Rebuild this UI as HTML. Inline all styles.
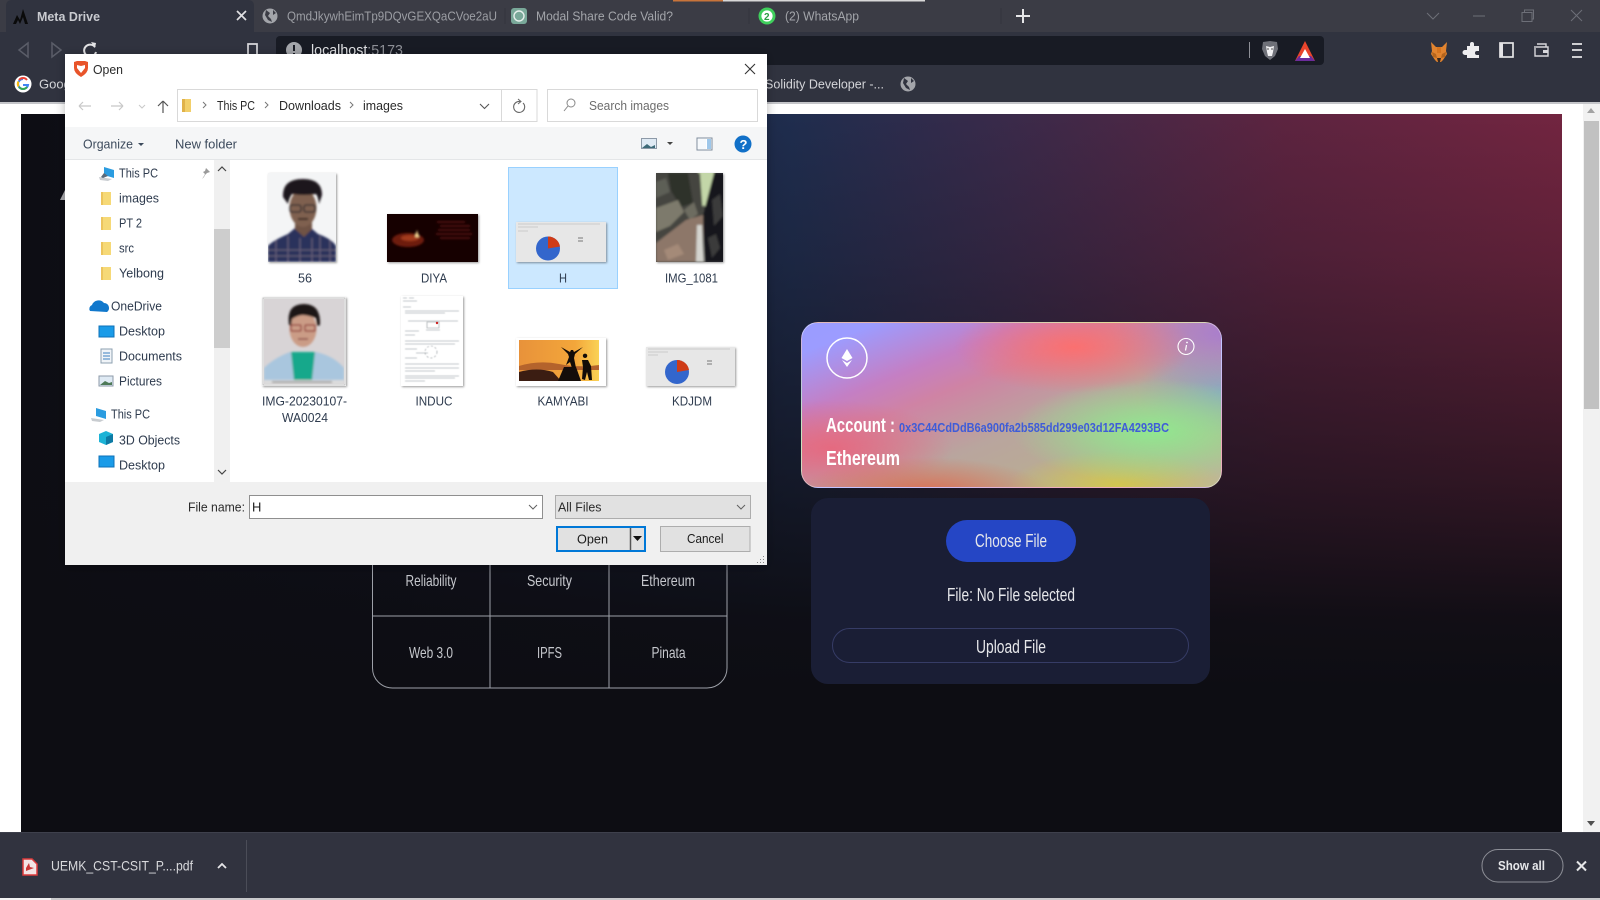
<!DOCTYPE html>
<html lang="en"><head><meta charset="utf-8"><title>Meta Drive</title>
<style>
html,body{margin:0;padding:0;width:1600px;height:900px;overflow:hidden;background:#fff}
#hero{position:absolute;left:21px;top:114px;width:1541px;height:718px;background:linear-gradient(to bottom,rgba(13,13,19,0) 0,rgba(13,13,19,.2) 20%,rgba(13,13,19,.62) 50%,rgba(13,13,19,.95) 70%,#0d0d13 80%),linear-gradient(90deg,#0d0d13 0,#101226 25%,#1f2d4e 50%,#3a2a4a 64%,#5d2440 82%,#722540 100%)}
#card{position:absolute;left:801px;top:322px;width:419px;height:164px;border:1px solid rgba(255,255,255,.4);border-radius:17px;background:
radial-gradient(ellipse 120px 46px at 272px 24px,#fb7070 0,rgba(250,112,112,.55) 45%,rgba(248,112,112,0) 100%),
radial-gradient(ellipse 140px 52px at 350px 108px,#90e890 0,rgba(144,232,144,.6) 45%,rgba(147,229,149,0) 100%),
radial-gradient(ellipse 110px 34px at 316px 162px,#d2c650 0,rgba(207,196,95,0) 100%),
radial-gradient(ellipse 130px 38px at 122px 172px,#dc6c50 0,rgba(219,111,88,0) 100%),
radial-gradient(ellipse 120px 48px at 30px 125px,#e56a80 0,rgba(226,108,130,0) 100%),
radial-gradient(ellipse 110px 60px at 419px 10px,#aa7ecc 0,rgba(173,128,198,0) 100%),
radial-gradient(ellipse 90px 45px at 425px 68px,#88abc0 0,rgba(143,169,184,0) 100%),
linear-gradient(158deg,#9a9cff 0,#9c9cff 9%,#c47fc4 27%,#cf83a4 38%,#b9a59e 58%,#b9ad92 78%,#bdb89a 100%)}
#panel{position:absolute;left:811px;top:498px;width:399px;height:186px;border-radius:17px;background:#1a1e35}
#btn{position:absolute;left:946px;top:520px;width:130px;height:42px;border-radius:21px;background:#2546c5}
#up{position:absolute;left:832px;top:628px;width:355px;height:33px;border:1px solid #363c66;border-radius:18px}
svg{position:absolute;left:0;top:0}
text{font-family:"Liberation Sans",sans-serif}
</style></head><body>
<div id="hero"></div><div id="card"></div><div id="panel"></div><div id="btn"></div><div id="up"></div>
<svg width="1600" height="900" viewBox="0 0 1600 900" xmlns="http://www.w3.org/2000/svg">
<defs>
<filter id="b1" x="-10%" y="-10%" width="120%" height="120%"><feGaussianBlur stdDeviation="1"/></filter>
<filter id="b2" x="-10%" y="-10%" width="120%" height="120%"><feGaussianBlur stdDeviation=".4"/></filter>
<filter id="sh" x="-5%" y="-5%" width="110%" height="110%"><feDropShadow dx="0" dy="1" stdDeviation="5" flood-color="#000" flood-opacity=".28"/></filter>
<filter id="ts" x="-10%" y="-10%" width="125%" height="125%"><feDropShadow dx="1" dy="1" stdDeviation="1" flood-color="#000" flood-opacity=".4"/></filter>
<linearGradient id="sun" x1="0" y1="0" x2="1" y2="0"><stop offset="0" stop-color="#e8923a"/><stop offset=".7" stop-color="#f3a63a"/><stop offset="1" stop-color="#fad255"/></linearGradient>
<clipPath id="c56"><rect x="268" y="173" width="68" height="89"/></clipPath>
<clipPath id="cg"><rect x="264" y="299" width="80" height="85"/></clipPath>
<clipPath id="cr"><rect x="656" y="173" width="67" height="89"/></clipPath>
</defs>

<!-- browser chrome -->
<rect x="0" y="0" width="1600" height="32" fill="#3b3c45"/>
<rect x="0" y="32" width="1600" height="71" fill="#30333f"/>
<rect x="0" y="102" width="1600" height="2" fill="#c4c5c9"/>
<path d="M6 32V6q0-6 6-6H248q6 0 6 6V32Z" fill="#30333f"/>
<rect x="673" y="0" width="50" height="1.5" fill="#c8743a"/><rect x="723" y="0" width="202" height="1.5" fill="#d8d8d8"/>
<path d="M505 8V24M749 8V24M1001 8V24" stroke="#33343d" stroke-width="1"/>
<path d="M13 24l4-9 3 5 3-11 5 15-3 0-2-7-3 7-2-4-2 4Z" fill="#0a0a0a"/>
<text x="37" y="21" font-size="13" font-weight="bold" fill="#c9cbd0" textLength="63" lengthAdjust="spacingAndGlyphs">Meta Drive</text>
<path d="M237 11l9 9M246 11l-9 9" stroke="#e0e0e2" stroke-width="1.7"/>
<circle cx="270" cy="16" r="7.5" fill="#a3a5aa"/><path d="M266 10l4 3-2 3 3 3 1 3-4-2-3-5ZM273 10l3 3-3 2Z" fill="#3b3c45"/>
<text x="287" y="20.5" font-size="13" fill="#9c9ea4" textLength="210" lengthAdjust="spacingAndGlyphs">QmdJkywhEimTp9DQvGEXQaCVoe2aU</text>
<rect x="511" y="8" width="16" height="16" rx="3" fill="#79a899"/><circle cx="519" cy="16" r="5" fill="none" stroke="#e6efec" stroke-width="1.4"/>
<text x="536" y="20.5" font-size="13" fill="#a3a5aa" textLength="137" lengthAdjust="spacingAndGlyphs">Modal Share Code Valid?</text>
<circle cx="767" cy="16" r="8.5" fill="#3fcf5c"/><circle cx="767" cy="16" r="5.6" fill="#fff"/><text x="764" y="20" font-size="10" font-weight="bold" fill="#2a9c42">2</text>
<text x="785" y="20.5" font-size="13" fill="#a3a5aa" textLength="74" lengthAdjust="spacingAndGlyphs">(2) WhatsApp</text>
<path d="M1023 9V23M1016 16H1030" stroke="#e6e6e8" stroke-width="2"/>
<path d="M1427 13l6 6 6-6" stroke="#6d6f78" fill="none"/><path d="M1473 16H1485" stroke="#6d6f78"/>
<path d="M1522 12.500h10v9h-10ZM1524.500 12v-2h9v9h-1.500" stroke="#6d6f78" fill="none"/>
<path d="M1571 10l11 11M1582 10l-11 11" stroke="#6d6f78"/>
<path d="M28 43l-9 7 9 7ZM52 43l9 7-9 7Z" fill="none" stroke="#5a5d68" stroke-width="1.500"/>
<path d="M95 47a6 6 0 1 0 1 5" fill="none" stroke="#e4e4e6" stroke-width="2"/><path d="M91 42l5 1-1 5Z" fill="#e4e4e6"/>
<path d="M248 44h9v14l-4.500-3-4.500 3Z" fill="none" stroke="#d8d8dc" stroke-width="1.700"/>
<rect x="276" y="36" width="1048" height="29" rx="4" fill="#181b24"/>
<circle cx="294" cy="50" r="8" fill="#a4a6ab"/><rect x="293" y="45" width="2" height="6" fill="#181b24"/><rect x="293" y="53" width="2" height="2" fill="#181b24"/>
<text x="311" y="55" font-size="15" textLength="92" lengthAdjust="spacingAndGlyphs"><tspan fill="#e2e3e6">localhost</tspan><tspan fill="#8e9097">:5173</tspan></text>
<path d="M1249.500 42V58" stroke="#8d8f96"/>
<path d="M1263 42l7-1 7 1 1 7-3 7-5 4-5-4-3-7Z" fill="#6f7179"/><path d="M1266 46l4 1 4-1-1 6-1 4h-4l-1-4Z" fill="#f0f0f2"/><path d="M1267 49h2M1271 49h2" stroke="#555" stroke-width="1"/>
<path d="M1305 41l10 20h-20Z" fill="#e8452c"/><path d="M1295 61l4-5h12l4 5Z" fill="#6b2c9c"/><path d="M1305 49l5 9h-10Z" fill="#fff"/>
<path d="M1431 42l5 5h6l5-5-1 9 1 3-4 6-2 2h-4l-2-2-4-6 1-3Z" fill="#e2842f"/><path d="M1432 52l4 2 1 4-4-1ZM1446 52l-4 2-1 4 4-1Z" fill="#b5651d"/><path d="M1437 58h4l-1 4h-2Z" fill="#3a2a20"/><path d="M1437 47h4v6h-4Z" fill="#d6751f"/>
<path d="M1467 46h3v-2a2 2 0 0 1 4 0v2h5v5h-2a2 2 0 0 0 0 4h2v3h-12v-3h-2a2 2 0 0 1 0-5h2Z" fill="#eeeef0"/>
<rect x="1500" y="43" width="13" height="14" fill="none" stroke="#e4e4e6" stroke-width="1.700"/><rect x="1500" y="43" width="3" height="14" fill="#e4e4e6"/>
<path d="M1535 46v10h13v-9h-12M1537 44h9v3" fill="none" stroke="#d8d8dc" stroke-width="1.400"/><rect x="1543" y="50" width="5" height="3" fill="#d8d8dc"/>
<path d="M1572 44h10M1572 50h10M1572 57h10" stroke="#e4e4e6" stroke-width="1.700"/>
<!-- bookmarks -->
<circle cx="23" cy="84" r="8.500" fill="#fff"/><path d="M23 79a5 5 0 1 0 5 6h-5" fill="none" stroke="#4285f4" stroke-width="2"/><path d="M27 80a5 5 0 0 0-8-0" fill="none" stroke="#ea4335" stroke-width="2"/><path d="M18.500 81.500a5 5 0 0 0 0 5" fill="none" stroke="#fbbc05" stroke-width="2"/><path d="M19 87a5 5 0 0 0 8 0" fill="none" stroke="#34a853" stroke-width="2"/>
<text x="39" y="88.500" font-size="13" fill="#d5d6da">Google</text>
<text x="765" y="88.500" font-size="13" fill="#d5d6da" textLength="119" lengthAdjust="spacingAndGlyphs">Solidity Developer -...</text>
<circle cx="908" cy="84" r="7.500" fill="#a3a5aa"/><path d="M904 78l4 3-2 3 3 3 1 3-4-2-3-5ZM911 78l3 3-3 2Z" fill="#30333f"/>
<!-- scrollbar -->
<rect x="1583" y="104" width="17" height="729" fill="#f1f1f1"/>
<rect x="1583" y="121" width="15" height="288" fill="#c1c1c1" transform="translate(1)"/>
<path d="M1591 108l4 5h-8Z" fill="#a3a3a3"/><path d="M1591 826l4-5h-8Z" fill="#505050"/>
<!-- grid -->
<path d="M372.500 560V668a20 20 0 0 0 20 20H707a20 20 0 0 0 20-20V560M372.500 616H727M490 560V688M609 560V688" fill="none" stroke="#9da0a8" stroke-width="1"/>
<g fill="#c6c8cd" font-size="16">
<text x="405.500" y="586" textLength="51" lengthAdjust="spacingAndGlyphs">Reliability</text>
<text x="527" y="586" textLength="45" lengthAdjust="spacingAndGlyphs">Security</text>
<text x="641" y="586" textLength="54" lengthAdjust="spacingAndGlyphs">Ethereum</text>
<text x="409" y="658" textLength="44" lengthAdjust="spacingAndGlyphs">Web 3.0</text>
<text x="537" y="658" textLength="25" lengthAdjust="spacingAndGlyphs">IPFS</text>
<text x="651.500" y="658" textLength="34" lengthAdjust="spacingAndGlyphs">Pinata</text>
</g>
<!-- card contents -->
<circle cx="847" cy="358" r="20" fill="none" stroke="#fff" stroke-width="1.500"/>
<path d="M847 349l5.500 9-5.500 3-5.500-3ZM842 360l5 3 5-3-5 7Z" fill="#fff"/>
<circle cx="1186" cy="346.500" r="8" fill="none" stroke="#fff" stroke-width="1.100"/><path d="M1186.500 345l-1 5.500" stroke="#fff" stroke-width="1.200"/><circle cx="1187" cy="342.500" r=".9" fill="#fff"/>
<text x="826" y="432" font-size="20" font-weight="bold" fill="#fff" textLength="69" lengthAdjust="spacingAndGlyphs">Account :</text>
<text x="899" y="432" font-size="13" font-weight="bold" fill="#3f5cd8" textLength="270" lengthAdjust="spacingAndGlyphs">0x3C44CdDdB6a900fa2b585dd299e03d12FA4293BC</text>
<text x="826" y="465" font-size="20" font-weight="bold" fill="#fff" textLength="74" lengthAdjust="spacingAndGlyphs">Ethereum</text>
<g fill="#e6e7ea" font-size="18" text-anchor="start">
<text x="975" y="547" textLength="72" lengthAdjust="spacingAndGlyphs">Choose File</text>
<text x="947" y="601" textLength="128" lengthAdjust="spacingAndGlyphs">File: No File selected</text>
<text x="976" y="653" textLength="70" lengthAdjust="spacingAndGlyphs">Upload File</text>
</g>
<!-- download bar -->
<rect x="0" y="832" width="1600" height="66" fill="#31333f"/><rect x="0" y="832" width="1600" height="1" fill="#3e404c"/>
<rect x="0" y="898" width="1600" height="2" fill="#c9c9cb"/><rect x="0" y="898" width="51" height="2" fill="#f4f4f4"/>
<path d="M23 859h9l5 5v11h-14Z" fill="#f3e4e4" stroke="#dc3b3b" stroke-width="1.500"/><path d="M26 868l3-5 1 4 4 1-8 3Z" fill="#c93636"/>
<text x="51" y="870.500" font-size="14" fill="#d8d9dc" textLength="142" lengthAdjust="spacingAndGlyphs">UEMK_CST-CSIT_P....pdf</text>
<path d="M218 868l4-4 4 4" fill="none" stroke="#e6e6e8" stroke-width="1.800"/>
<path d="M246.500 840V892" stroke="#4b4d58"/>
<rect x="1482" y="849.500" width="81" height="32.500" rx="16" fill="none" stroke="#8d8f97"/>
<text x="1498" y="870" font-size="13" font-weight="bold" fill="#e6e7ea" textLength="47" lengthAdjust="spacingAndGlyphs">Show all</text>
<path d="M1577 861.500l9 9M1586 861.500l-9 9" stroke="#e6e6e8" stroke-width="2"/>

<!-- dialog -->
<rect x="65" y="54" width="702" height="511" fill="#fff" filter="url(#sh)"/>
<rect x="65" y="127" width="702" height="33" fill="#f5f6f7"/><path d="M65 159.500H767" stroke="#e4e6e8"/>
<rect x="65" y="482" width="702" height="83" fill="#f0f0f0"/>
<path d="M74 62l3-1h8l3 1v6q0 5-7 9-7-4-7-9Z" fill="#e8542a"/><path d="M77 65l4 1 4-1v3l-4 5-4-5Z" fill="#fff"/>
<text x="93" y="74" font-size="13" fill="#2b2b2b" textLength="30" lengthAdjust="spacingAndGlyphs">Open</text>
<path d="M745 64l10 10M755 64l-10 10" stroke="#333" stroke-width="1.100"/>
<path d="M79 106H91M79 106l4-4M79 106l4 4" fill="none" stroke="#c8c8c8" stroke-width="1.200"/>
<path d="M111 106H123M123 106l-4-4M123 106l-4 4" fill="none" stroke="#c8c8c8" stroke-width="1.200"/>
<path d="M139 105l3 3 3-3" fill="none" stroke="#c8c8c8"/>
<path d="M163 113V101M163 101l-5 5M163 101l5 5" fill="none" stroke="#555" stroke-width="1.200"/>
<rect x="177.500" y="89.500" width="359.500" height="32" fill="#fff" stroke="#d9d9d9"/><path d="M501.500 90V121" stroke="#d9d9d9"/>
<rect x="182" y="99" width="9" height="13" fill="#f2cf6a"/><rect x="182" y="99" width="3" height="13" fill="#e0b24a"/>
<g fill="none" stroke="#777" stroke-width="1"><path d="M203 102l3 3-3 3M265 102l3 3-3 3M350 102l3 3-3 3"/></g>
<g fill="#2a2a2a" font-size="13">
<text x="217" y="110" textLength="38" lengthAdjust="spacingAndGlyphs">This PC</text>
<text x="279" y="110" textLength="62" lengthAdjust="spacingAndGlyphs">Downloads</text>
<text x="363" y="110" textLength="40" lengthAdjust="spacingAndGlyphs">images</text>
</g>
<path d="M480 104l4.500 4.500 4.500-4.500" fill="none" stroke="#555" stroke-width="1.100"/>
<path d="M523 103a5.500 5.500 0 1 1-3-1.500" fill="none" stroke="#666" stroke-width="1.100"/><path d="M518 99l3 2.500-3 2.500" fill="none" stroke="#666"/>
<rect x="547.500" y="89.500" width="210" height="32" fill="#fff" stroke="#d9d9d9"/>
<circle cx="571" cy="103" r="4" fill="none" stroke="#888"/><path d="M568 106l-4 5" stroke="#888"/>
<text x="589" y="110" font-size="13" fill="#6d6d6d" textLength="80" lengthAdjust="spacingAndGlyphs">Search images</text>
<text x="83" y="148.500" font-size="13" fill="#3c4a5c" textLength="50" lengthAdjust="spacingAndGlyphs">Organize</text>
<path d="M138 143h6l-3 3Z" fill="#3c4a5c"/>
<text x="175" y="148.500" font-size="13" fill="#3c4a5c" textLength="62" lengthAdjust="spacingAndGlyphs">New folder</text>
<rect x="641.500" y="138.500" width="15" height="10" fill="#dfeaf4" stroke="#8d9aa8"/><path d="M642 148l5-4 4 3 4-2v3Z" fill="#3d6a78"/>
<path d="M667 142h6l-3 3Z" fill="#444"/>
<rect x="697" y="138" width="15" height="12" fill="#fff" stroke="#7e8c9c"/><rect x="707" y="139" width="4" height="10" fill="#9ec7ea"/><rect x="698" y="139" width="8" height="10" fill="#f6f9fc"/>
<circle cx="743" cy="144" r="8.500" fill="#1170c8"/><text x="739.500" y="149" font-size="13" font-weight="bold" fill="#fff">?</text>
<!-- sidebar -->
<rect x="214" y="160" width="16" height="322" fill="#f0f0f0"/><rect x="214" y="229" width="16" height="119" fill="#cdcdcd"/>
<path d="M218 171l4-4 4 4M218 470l4 4 4-4" fill="none" stroke="#444" stroke-width="1.200"/>
<path d="M206 168l4 4-3 1-2 2-1 2-2 2 2-3 1-2-2-2 2-1Z" fill="#9a9a9a"/>
<g><path d="M104 167l10 3v8l-10-3Z" fill="#2b9ce0"/><path d="M99 177l13 2-4 2-8-1Z" fill="#c8ccd0"/><path d="M104 173l4 3-5 2-2-1Z" fill="#5a6a7a"/></g>
<g fill="#f6d977"><rect x="101" y="192" width="10" height="13"/><rect x="101" y="217" width="10" height="13"/><rect x="101" y="242" width="10" height="13"/><rect x="101" y="267" width="10" height="13"/></g>
<g fill="#ecc45e"><rect x="101" y="192" width="2" height="13"/><rect x="101" y="217" width="2" height="13"/><rect x="101" y="242" width="2" height="13"/><rect x="101" y="267" width="2" height="13"/></g>
<path d="M90 311a4 4 0 0 1 2-6 7 7 0 0 1 12-2 5 5 0 0 1 3 9Z" fill="#1178cc"/>
<rect x="99" y="326" width="15" height="11" fill="#1a9be8" stroke="#0e72b8"/><rect x="99" y="456" width="15" height="11" fill="#1a9be8" stroke="#0e72b8"/>
<rect x="101" y="349" width="11" height="14" fill="#f0f4f8" stroke="#8ea0b0"/><path d="M103 353h7M103 356h7M103 359h7" stroke="#3d80c0"/>
<rect x="99" y="376" width="14" height="10" fill="#dfeaf4" stroke="#8d9aa8"/><path d="M100 385l5-4 4 2 3-1v3Z" fill="#4e7a58"/>
<path d="M96 408l10 3v8l-10-3Z" fill="#2b9ce0"/><path d="M91 418l13 2-4 2-8-1Z" fill="#c8ccd0"/>
<path d="M99 434l7-3 7 3v8l-7 3-7-3Z" fill="#1db3d6"/><path d="M106 437v8l7-3v-8Z" fill="#0e7aa4"/>
<g fill="#2e3b4e" font-size="13">
<text x="119" y="177.500" textLength="39" lengthAdjust="spacingAndGlyphs">This PC</text>
<text x="119" y="202.500" textLength="40" lengthAdjust="spacingAndGlyphs">images</text>
<text x="119" y="227.500" textLength="23" lengthAdjust="spacingAndGlyphs">PT 2</text>
<text x="119" y="252.500" textLength="15" lengthAdjust="spacingAndGlyphs">src</text>
<text x="119" y="277.500" textLength="45" lengthAdjust="spacingAndGlyphs">Yelbong</text>
<text x="111" y="310.500" textLength="51" lengthAdjust="spacingAndGlyphs">OneDrive</text>
<text x="119" y="335.500" textLength="46" lengthAdjust="spacingAndGlyphs">Desktop</text>
<text x="119" y="360.500" textLength="63" lengthAdjust="spacingAndGlyphs">Documents</text>
<text x="119" y="385.500" textLength="43" lengthAdjust="spacingAndGlyphs">Pictures</text>
<text x="111" y="418.500" textLength="39" lengthAdjust="spacingAndGlyphs">This PC</text>
<text x="119" y="444.500" textLength="61" lengthAdjust="spacingAndGlyphs">3D Objects</text>
<text x="119" y="469.500" textLength="46" lengthAdjust="spacingAndGlyphs">Desktop</text>
</g>
<!-- selection -->
<rect x="508.500" y="167.500" width="109" height="121" fill="#cce8ff" stroke="#99d1ff"/>
<!-- thumb 56 -->
<rect x="268" y="173" width="68" height="89" fill="#f4f5f6" filter="url(#ts)"/>
<g clip-path="url(#c56)"><g filter="url(#b1)">
<path d="M268 262v-16q4-5 20-12l7-6h16l7 6q14 5 18 12v16Z" fill="#29315c"/>
<path d="M276 240v22M288 236v26M300 238v24M312 238v24M320 236v26M330 240v22M268 250H336M268 256H336" stroke="#6a6478" stroke-width="1.100"/>
<path d="M295 220h17v9l-8 8-9-8Z" fill="#6f5244"/>
<ellipse cx="303" cy="208" rx="13.500" ry="19" fill="#7f6150"/>
<path d="M283 197q-1-18 20-18 19 0 19 16l-3 9q-1-8-3-10-12 2-24 0-3 4-4 10Z" fill="#1d191b"/>
<rect x="290" y="205" width="11" height="7" rx="2" fill="none" stroke="#28282b" stroke-width="1.300"/><rect x="304" y="205" width="11" height="7" rx="2" fill="none" stroke="#28282b" stroke-width="1.300"/>
<path d="M298 219h10" stroke="#33241f" stroke-width="1.800"/>
</g></g>
<!-- thumb DIYA -->
<rect x="387" y="214" width="91" height="48" fill="#120404" filter="url(#ts)"/>
<g filter="url(#b1)"><ellipse cx="408" cy="240" rx="16" ry="7" fill="#6e1a10"/><ellipse cx="410" cy="238" rx="9" ry="3" fill="#a33b1a"/><path d="M415 237l2-7 2 7Z" fill="#ffe19a"/>
<path d="M437 222h28M440 226h30M438 230h32M436 234h36M440 238h30" stroke="#7c1a1a" stroke-width="1"/></g>
<!-- thumb H -->
<rect x="516" y="222" width="90" height="40" fill="#e7e7e7" filter="url(#ts)"/>
<path d="M518 224h82M518 227h20M518 231h10" stroke="#8a8a8a" stroke-width=".6" opacity=".6"/>
<circle cx="548" cy="248.500" r="12" fill="#3366cc"/><path d="M548 248.500v-12a12 12 0 0 1 12 10Z" fill="#cf3b17"/>
<path d="M578 238h5M578 241h5" stroke="#777" stroke-width=".9"/>
<!-- thumb IMG_1081 -->
<rect x="656" y="173" width="67" height="89" fill="#4a4a44" filter="url(#ts)"/>
<g clip-path="url(#cr)"><g filter="url(#b1)">
<rect x="698" y="170" width="16" height="36" fill="#c3d6a8"/>
<path d="M656 173h44l3 42-20 10-27 16Z" fill="#44453f"/>
<path d="M668 173h20l5 30-12 4-10-16Z" fill="#2f302c"/>
<path d="M656 208l22-8 6 12-14 14-14 6Z" fill="#7d7a6c"/>
<path d="M656 182l10-4 4 14-14 6Z" fill="#5d5e56"/>
<path d="M684 210l10-8 4 12-8 6Z" fill="#6d6c60"/>
<path d="M725 173h-11l-11 42 2 47h20Z" fill="#17171a"/>
<path d="M712 200l8-6 3 22-9 10ZM708 238l8-4 4 14-8 10Z" fill="#3b3b3b"/>
<path d="M656 243l30-23 17-5 0 47h-47Z" fill="#8d7769"/>
<path d="M664 250l14-6 6 10-16 6Z" fill="#a48a78"/>
<path d="M697 225h5l2 37h-8Z" fill="#d4d4cf"/>
</g></g>
<!-- thumb IMG-2023 -->
<rect x="262" y="297" width="84" height="89" fill="#fff" filter="url(#ts)"/>
<rect x="263" y="298" width="82" height="87" fill="none" stroke="#bcbcbc"/>
<rect x="264" y="299" width="80" height="85" fill="#d8d4d6"/>
<g clip-path="url(#cg)"><g filter="url(#b1)">
<path d="M264 384v-16q10-10 26-16h26q18 4 28 16v16Z" fill="#a9c6de"/>
<path d="M291 352h24l-3 28h-18Z" fill="#17a88b"/>
<ellipse cx="303" cy="329" rx="13.500" ry="18" fill="#cb9c86"/>
<path d="M289 325q-3-21 15-21 17 0 16 21l-3 1-1-8q-9-3-13-3-5 0-11 4l-1 7Z" fill="#1b1718"/>
<rect x="291" y="325" width="10" height="6" rx="1" fill="none" stroke="#8d3030" stroke-width="1.200"/><rect x="305" y="325" width="10" height="6" rx="1" fill="none" stroke="#8d3030" stroke-width="1.200"/>
<path d="M298 339h10" stroke="#8c4f48" stroke-width="1.500"/>
<rect x="264" y="380" width="80" height="4" fill="#dcdcdc"/><path d="M272 382h60" stroke="#666" stroke-width="1.500" opacity=".6"/>
</g></g>
<!-- thumb INDUC -->
<rect x="401" y="296" width="62" height="90" fill="#fff" filter="url(#ts)"/>
<g stroke="#8f959b" stroke-width=".6" filter="url(#b2)">
<path d="M403 298h4M409 298h5M403 301h14M403 307h8M405 311h54M405 313h40M408 321h50M405 331h14M405 335h10M405 341h54M405 344h50M405 349h12M416 353h12M405 358h12M405 364h54M405 368h54M405 371h30M405 376h54M405 378h50M405 381h20"/>
<path d="M427 322h12v6h-12ZM426 330h14" fill="none"/><circle cx="431" cy="352" r="6" fill="none" stroke-dasharray="2 2"/>
</g><circle cx="437" cy="323" r="1.200" fill="#c22"/>
<!-- thumb KAMYABI -->
<rect x="516" y="338" width="90" height="48" fill="#fff" filter="url(#ts)"/>
<rect x="519" y="340" width="80" height="41" fill="url(#sun)"/>
<path d="M519 366q20-6 40-2t40 1v5H519Z" fill="#b4632c"/>
<path d="M519 372q18-5 34 0l8 9h-42Z" fill="#3b1d12"/>
<path d="M558 381l6-14 12 0 5 14Z" fill="#140d0a"/>
<path d="M561 347l9 5 1-2 2 0 1 2 9-5-8 7-1 4 2 10-4 0-2-6-4 3 3-8-1-3Z" fill="#120c08"/>
<path d="M585 358a2.200 2.200 0 1 1 .1 0ZM582 360l6 0 3 6 1 14-3 0-2-8-2 8-3-1 1-12Z" fill="#120c08"/>
<!-- thumb KDJDM -->
<rect x="646" y="347" width="89" height="39" fill="#e7e7e7" filter="url(#ts)"/>
<path d="M648 349h82M648 352h20M648 355h10" stroke="#8a8a8a" stroke-width=".6" opacity=".6"/>
<circle cx="677" cy="372" r="12" fill="#3366cc"/><path d="M677 372v-12a12 12 0 0 1 12 10Z" fill="#cf3b17"/>
<path d="M707 361h5M707 364h5" stroke="#777" stroke-width=".9"/>
<!-- labels -->
<g fill="#2e3b4e" font-size="13">
<text x="298" y="282.500" textLength="14" lengthAdjust="spacingAndGlyphs">56</text>
<text x="421" y="282.500" textLength="26" lengthAdjust="spacingAndGlyphs">DIYA</text>
<text x="559" y="282.500" textLength="8" lengthAdjust="spacingAndGlyphs">H</text>
<text x="665" y="282.500" textLength="53" lengthAdjust="spacingAndGlyphs">IMG_1081</text>
<text x="262" y="405.500" textLength="85" lengthAdjust="spacingAndGlyphs">IMG-20230107-</text>
<text x="282" y="422" textLength="46" lengthAdjust="spacingAndGlyphs">WA0024</text>
<text x="415.500" y="405.500" textLength="37" lengthAdjust="spacingAndGlyphs">INDUC</text>
<text x="537.500" y="405.500" textLength="51" lengthAdjust="spacingAndGlyphs">KAMYABI</text>
<text x="672" y="405.500" textLength="40" lengthAdjust="spacingAndGlyphs">KDJDM</text>
</g>
<!-- footer -->
<text x="188" y="511.500" font-size="13" fill="#2b2b2b" textLength="57" lengthAdjust="spacingAndGlyphs">File name:</text>
<rect x="249.500" y="495.500" width="293" height="23" fill="#fff" stroke="#8f8f8f"/>
<text x="252" y="511.500" font-size="13" fill="#1a1a1a">H</text>
<path d="M529 505l4 4 4-4" fill="none" stroke="#606060"/>
<rect x="555.500" y="495.500" width="195" height="23" fill="#e1e1e1" stroke="#adadad"/>
<text x="558" y="511.500" font-size="13" fill="#2b2b2b" textLength="43.500" lengthAdjust="spacingAndGlyphs">All Files</text>
<path d="M737 505l4 4 4-4" fill="none" stroke="#606060"/>
<rect x="557" y="527" width="88" height="24" fill="#e1e1e1" stroke="#0078d7" stroke-width="2"/>
<path d="M630.500 528V550" stroke="#555" stroke-width="1.500"/><path d="M633 536h9l-4.500 5Z" fill="#111"/>
<text x="577" y="543.500" font-size="13" fill="#1a1a1a" textLength="31" lengthAdjust="spacingAndGlyphs">Open</text>
<rect x="660.500" y="526.500" width="89.500" height="25" fill="#e1e1e1" stroke="#adadad"/>
<text x="687" y="543" font-size="13" fill="#1a1a1a" textLength="36.500" lengthAdjust="spacingAndGlyphs">Cancel</text>
<path d="M763 556h1v1h-1ZM760 559h1v1h-1ZM763 559h1v1h-1ZM757 562h1v1h-1ZM760 562h1v1h-1ZM763 562h1v1h-1Z" fill="#888"/>
<!-- peek logo left of dialog -->
<path d="M60 200l5-10v10Z" fill="#9a9a9e"/>
</svg>
</body></html>
